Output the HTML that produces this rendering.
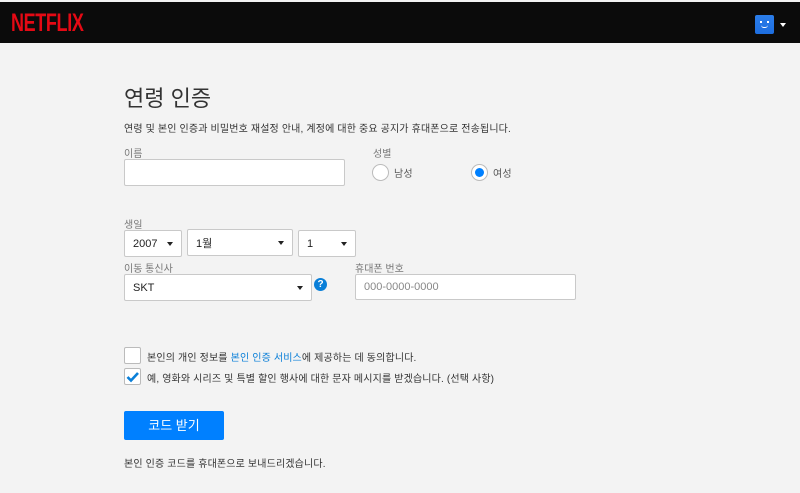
<!DOCTYPE html>
<html><head><meta charset="utf-8"><style>
*{box-sizing:border-box;margin:0;padding:0}
body{width:800px;height:493px;background:#f3f3f3;font-family:"Liberation Sans","Noto Sans CJK KR",sans-serif;color:#333;position:relative;overflow:hidden}
.hdr{position:absolute;left:0;top:2px;width:800px;height:41px;background:#0b0b0b}
.logo{position:absolute;left:11px;top:7px;color:#e50914;font-weight:bold;font-size:25px;letter-spacing:-0.5px;transform:scaleX(0.72);transform-origin:left;font-family:"Liberation Sans Narrow","Liberation Sans",sans-serif}
.av{position:absolute;left:755px;top:13px;width:19px;height:19px;background:linear-gradient(#2b7de9,#1d6ee0);border-radius:2px}
.caret{position:absolute;left:780px;top:21px;border:3px solid transparent;border-top:4px solid #fff}
.a{position:absolute}
.lbl{font-size:10px;color:#777}
.box{position:absolute;background:#fff;border:1px solid #c9c9c9;border-radius:2px;font-size:11px;color:#222;padding-left:8px;display:flex;align-items:center}
.dd{position:absolute;right:8px;top:50%;margin-top:-2px;border:3.5px solid transparent;border-top:4px solid #222}
.radio{position:absolute;width:17px;height:17px;border-radius:50%;background:#fff;border:1px solid #bbb}
.cb{position:absolute;width:17px;height:17px;background:#fff;border:1px solid #bbb;border-radius:2px}
.t{font-size:10px;color:#333;white-space:nowrap;letter-spacing:0.15px}
</style></head><body>
<div class="hdr"><div class="logo">NETFLIX</div><div class="av"><div style="position:absolute;left:5px;top:6px;width:2px;height:2px;background:#fff"></div><div style="position:absolute;left:12px;top:6px;width:2px;height:2px;background:#fff"></div><div style="position:absolute;left:6px;top:10px;width:7px;height:3px;border-bottom:1px solid #fff;border-radius:0 0 4px 4px"></div></div><div class="caret"></div></div>
<div class="a" style="left:124px;top:81px;font-size:22px;color:#333">연령 인증</div>
<div class="a t" style="left:124px;top:120px">연령 및 본인 인증과 비밀번호 재설정 안내, 계정에 대한 중요 공지가 휴대폰으로 전송됩니다.</div>
<div class="a lbl" style="left:124px;top:145px">이름</div>
<div class="box" style="left:124px;top:159px;width:221px;height:27px"></div>
<div class="a lbl" style="left:373px;top:145px">성별</div>
<div class="radio" style="left:372px;top:164px"></div>
<div class="a t" style="left:394px;top:165px;color:#555">남성</div>
<div class="radio" style="left:471px;top:164px"><div style="position:absolute;left:3px;top:3px;width:9px;height:9px;border-radius:50%;background:#0080ff"></div></div>
<div class="a t" style="left:493px;top:165px;color:#555">여성</div>
<div class="a lbl" style="left:124px;top:216px">생일</div>
<div class="box" style="left:124px;top:230px;width:58px;height:27px">2007<div class="dd"></div></div>
<div class="box" style="left:187px;top:229px;width:106px;height:27px">1월<div class="dd"></div></div>
<div class="box" style="left:298px;top:230px;width:58px;height:27px">1<div class="dd"></div></div>
<div class="a lbl" style="left:124px;top:260px">이동 통신사</div>
<div class="box" style="left:124px;top:274px;width:188px;height:27px">SKT<div class="dd"></div></div>
<div class="a" style="left:314px;top:278px;width:13px;height:13px;border-radius:50%;background:#0a7fd8;color:#fff;font-size:10px;font-weight:bold;text-align:center;line-height:13px">?</div>
<div class="a lbl" style="left:355px;top:260px">휴대폰 번호</div>
<div class="box" style="left:355px;top:274px;width:221px;height:26px;color:#888">000-0000-0000</div>
<div class="cb" style="left:124px;top:347px"></div>
<div class="a t" style="left:147px;top:349px">본인의 개인 정보를 <span style="color:#0a7fd8">본인 인증 서비스</span>에 제공하는 데 동의합니다.</div>
<div class="cb" style="left:124px;top:368px"><svg width="15" height="15" style="position:absolute;left:0;top:0"><path d="M2.5 8 L6 11.5 L13 4" stroke="#0a7fd8" stroke-width="2.6" fill="none"/></svg></div>
<div class="a t" style="left:147px;top:370px">예, 영화와 시리즈 및 특별 할인 행사에 대한 문자 메시지를 받겠습니다. (선택 사항)</div>
<div class="a" style="left:124px;top:411px;width:100px;height:29px;background:#0080ff;color:#fff;font-size:13px;text-align:center;line-height:29px;border-radius:2px">코드 받기</div>
<div class="a t" style="left:124px;top:455px">본인 인증 코드를 휴대폰으로 보내드리겠습니다.</div>
</body></html>
